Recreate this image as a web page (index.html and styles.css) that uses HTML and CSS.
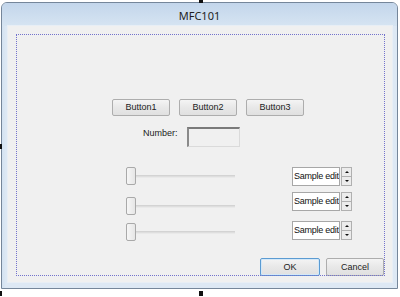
FILE: index.html
```html
<!DOCTYPE html>
<html>
<head lang="en">
    <meta charset="UTF-8">
    <title>MFC101</title>
    <link rel="stylesheet" href="styles.css">
</head>
<body>
<div class="screen">
    <div class="window">
        <div class="titlebar">MFC101</div>
        <div class="client">
            <div class="guide"></div>
            <div class="row-buttons">
                <div class="btn">Button1</div>
                <div class="btn">Button2</div>
                <div class="btn">Button3</div>
            </div>
            <div class="row-number">
                <span class="label">Number:</span>
                <div class="sunken"></div>
            </div>
            <div class="row-sliders">
                <div class="sliders">
                    <div class="slider s1"><div class="thumb"></div><div class="track"></div></div>
                    <div class="slider s2"><div class="thumb"></div><div class="track"></div></div>
                    <div class="slider s3"><div class="thumb"></div><div class="track"></div></div>
                </div>
                <div class="spins">
                    <div class="spinedit e1"><div class="edit">Sample edit</div><div class="spin"><span class="up"></span><span class="down"></span></div></div>
                    <div class="spinedit e2"><div class="edit">Sample edit</div><div class="spin"><span class="up"></span><span class="down"></span></div></div>
                    <div class="spinedit e3"><div class="edit">Sample edit</div><div class="spin"><span class="up"></span><span class="down"></span></div></div>
                </div>
            </div>
            <div class="row-ok">
                <div class="btn ok">OK</div>
                <div class="btn cancel">Cancel</div>
            </div>
        </div>
    </div>
    <span class="handle h-top"></span>
    <span class="handle h-left"></span>
    <span class="handle h-bl"></span>
    <span class="handle h-bottom"></span>
</div>
</body>
</html>
```

FILE: styles.css
```css
body{
    margin: 0;
    padding: 0;
    background: #fff;
}
.screen{
    width: 400px;
    height: 297px;
    position: relative;
    overflow: hidden;
    padding-top: 2px;
    box-sizing: border-box;
    font-family: "Liberation Sans", Arial, sans-serif;
    font-size: 9px;
    color: #1e1e1e;
}
.window{
    margin-left: 1px;
    width: 397px;
    height: 287px;
    box-sizing: border-box;
    border: 1px solid #75869a;
    border-radius: 6px 6px 0 0;
    background: linear-gradient(to right, #d3e2f1, #dde8f4 4px, #dde8f4);
    padding: 0 5px 6px 6px;
}
.titlebar{
    height: 19px;
    padding-top: 4px;
    line-height: 18px;
    text-align: center;
    font-family: "Noto Sans", "Open Sans", sans-serif;
    font-size: 11px;
    color: #1e1e1e;
    margin: 0 -5px 0 -6px;
    border-radius: 5px 5px 0 0;
    background: linear-gradient(#c3d6eb, #d6e4f2);
}
.client{
    height: 256px;
    background: #f0f0f0;
    position: relative;
    box-shadow: 0 0 0 1px #e8eef5;
}
.guide{
    position: absolute;
    left: 8px;
    top: 8px;
    width: 369px;
    height: 242px;
    box-sizing: border-box;
    border: 1px dotted #7373cc;
    pointer-events: none;
}
.btn{
    box-sizing: border-box;
    height: 17px;
    line-height: 15px;
    text-align: center;
    border: 1px solid #adadad;
    border-radius: 2px;
    background: linear-gradient(#f4f4f4, #e8e8e8 50%, #e0e0e0);
    color: #222;
}
.row-buttons{
    display: flex;
    gap: 9px;
    padding-top: 73px;
    padding-left: 104px;
}
.row-buttons .btn{
    width: 58px;
}
.row-number{
    display: flex;
    align-items: flex-start;
    margin-top: 11px;
    padding-left: 135px;
}
.label{
    width: 36px;
    margin-right: 8px;
    line-height: 12px;
    color: #222;
}
.sunken{
    width: 53px;
    height: 20px;
    box-sizing: border-box;
    border-top: 2px solid #7a7a7a;
    border-left: 2px solid #8a8a8a;
    border-right: 1px solid #dadada;
    border-bottom: 1px solid #dadada;
    background: #f0f0f0;
}
.row-sliders{
    display: flex;
    align-items: flex-start;
    margin-top: 20px;
    padding-left: 118px;
}
.sliders{
    width: 109px;
}
.slider{
    display: flex;
    align-items: center;
    height: 18px;
}
.s2{ margin-top: 12px; }
.s3{ margin-top: 8px; }
.thumb{
    width: 10px;
    height: 18px;
    box-sizing: border-box;
    border: 1px solid #a9a9a9;
    border-radius: 2px;
    background: linear-gradient(to right, #f6f6f6, #e6e6e6);
}
.track{
    flex: 1;
    height: 3px;
    box-sizing: border-box;
    border-top: 1px solid #d3d3d3;
    border-bottom: 1px solid #e9e9e9;
    background: #dedede;
}
.spins{
    margin-left: 57px;
}
.spinedit{
    display: flex;
    height: 19px;
}
.e2{ margin-top: 6px; }
.e3{ margin-top: 10px; }
.edit{
    width: 48px;
    box-sizing: border-box;
    border: 1px solid #a7a7a7;
    background: #fff;
    line-height: 17px;
    padding-left: 1px;
    letter-spacing: -0.25px;
    white-space: nowrap;
    overflow: hidden;
    color: #111;
}
.spin{
    width: 11px;
    margin-left: 1px;
    display: flex;
    flex-direction: column;
}
.spin span{
    flex: 1;
    box-sizing: border-box;
    border: 1px solid #b0b0b0;
    background: #ececec;
    display: flex;
    align-items: center;
    justify-content: center;
}
.spin .down{
    border-top: none;
}
.spin .up::before{
    content: "";
    border-left: 2px solid transparent;
    border-right: 2px solid transparent;
    border-bottom: 2px solid #111;
}
.spin .down::before{
    content: "";
    border-left: 2px solid transparent;
    border-right: 2px solid transparent;
    border-top: 2px solid #111;
}
.row-ok{
    display: flex;
    gap: 6px;
    margin-top: 17px;
    padding-left: 252px;
}
.row-ok .btn{
    height: 18px;
    line-height: 16px;
}
.ok{
    width: 60px;
    border-color: #5b9bd2;
    box-shadow: inset 0 0 0 1px #d4e8f8;
}
.cancel{
    width: 58px;
}
.handle{
    position: absolute;
    width: 4px;
    height: 5px;
    background: #111;
}
.h-top{ left: 199px; top: -2px; }
.h-left{ left: -2px; top: 144px; }
.h-bl{ left: -2px; top: 291px; }
.h-bottom{ left: 199px; top: 291px; }
```
